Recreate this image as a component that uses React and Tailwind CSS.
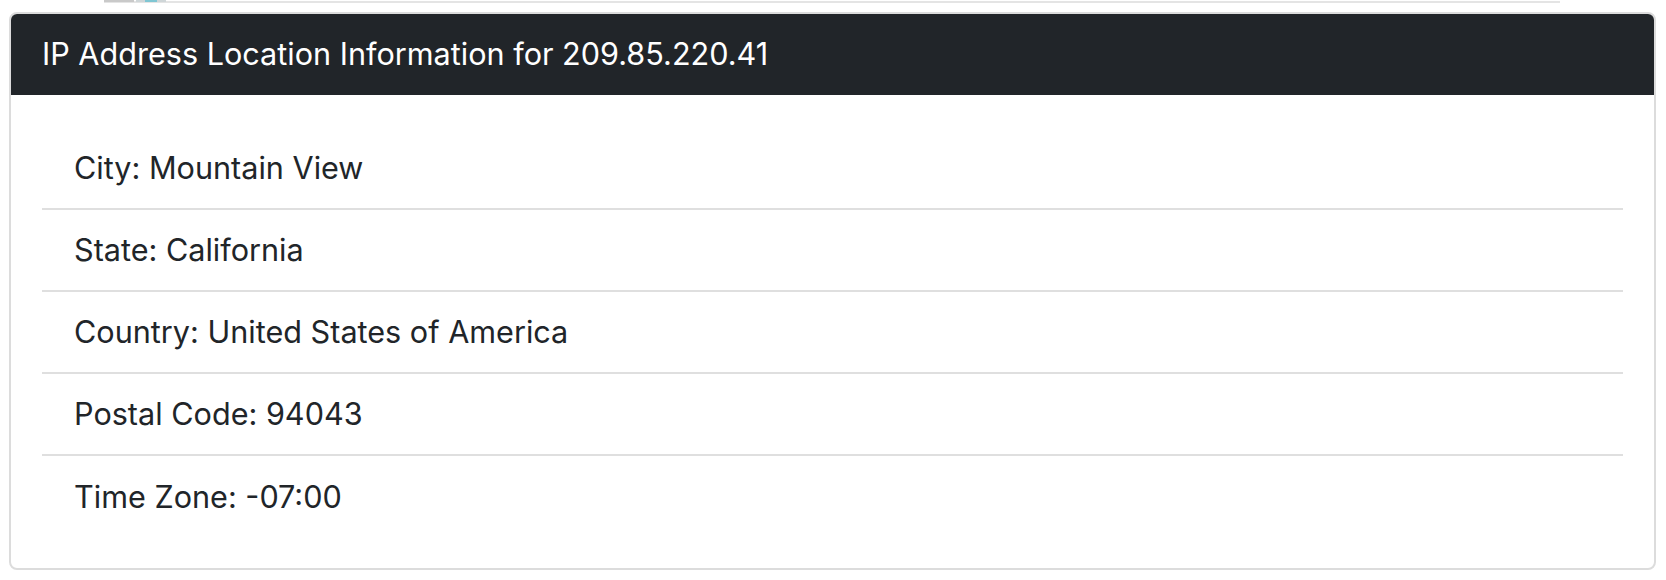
export default function App() {
    const rows = [
        'City: Mountain View',
        'State: California',
        'Country: United States of America',
        'Postal Code: 94043',
        'Time Zone: -07:00',
    ];

    return (
        <div className="w-[1666px] h-[580px] bg-white overflow-hidden" style={{ fontFamily: 'Inter, "Liberation Sans", sans-serif' }}>
            {/* bottom edge of the element above, cut off */}
            <div className="ml-[104px] w-[1456px] h-[3px] flex items-start border-b-2 border-[#e4e4e4]">
                <div className="w-[30px] h-[2px] bg-[#c9c9c9]" />
                <div className="ml-[2px] w-[30px] h-[2px] bg-[#cfd6d8] flex justify-center">
                    <div className="w-[12px] h-[2px] bg-[#7fc6d3]" />
                </div>
            </div>

            <div className="mt-[9px] mx-[9px] w-[1647px] border-2 border-[#dcdcdc] rounded-[8px] overflow-hidden">
                {/* card header */}
                <div className="h-[82px] bg-[#212529] text-white flex items-center pl-[31px] text-[30.6px] -mt-[1px]">
                    IP Address Location Information for 209.85.220.41
                </div>

                {/* card body */}
                <div className="px-[31px] pt-[33px] pb-[30px]">
                    {rows.map((r, i) => (
                        <div key={i}
                            className={`h-[82px] flex items-center pl-[32px] text-[30.6px] text-[#212529] ${i < rows.length - 1 ? 'border-b-2 border-[#dfdfdf]' : ''}`}>
                            {r}
                        </div>
                    ))}
                </div>
            </div>
        </div>
    );
}
